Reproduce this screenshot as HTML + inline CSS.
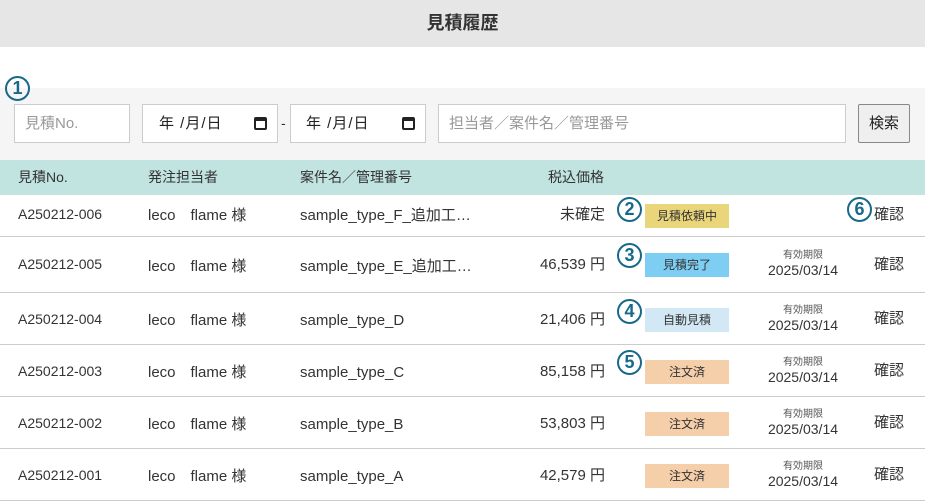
<!DOCTYPE html>
<html><head><meta charset="utf-8"><style>
*{box-sizing:border-box;margin:0;padding:0}
body{width:925px;height:502px;overflow:hidden;background:#fff;font-family:"Liberation Sans","Noto Sans CJK JP",sans-serif;color:#333;position:relative}
.hd{height:47px;background:#e6e6e6;text-align:center;font-weight:bold;font-size:18px;line-height:47px;color:#333}
.filter{position:absolute;top:88px;left:0;width:925px;height:72px;background:#f5f5f5}
.inp{position:absolute;top:16px;height:39px;background:#fff;border:1px solid #ccc;font-size:15px;line-height:37px;padding-left:10px;color:#999}
.date{color:#222;letter-spacing:1px}
.cal{position:absolute;right:10px;top:12px;width:13px;height:13px;border:2px solid #222;border-top-width:4px;border-radius:2px}
.btn{position:absolute;left:858px;top:16px;width:52px;height:39px;background:#efefef;border:1px solid #888;border-radius:2px;font-size:15px;line-height:37px;text-align:center;color:#222}
.num{position:absolute;width:25px;height:25px;border:2px solid #17698a;border-radius:50%;color:#17698a;font-size:18px;line-height:21px;font-weight:bold;text-align:center}
.th{position:absolute;top:160px;left:0;width:925px;height:35px;background:#c2e4e1;font-size:14px}
.th span,.row span{position:absolute;line-height:20px}
.th span{top:7px}
.row{position:absolute;left:0;width:925px;border-bottom:1px solid #ccc;font-size:15px}
.c1{left:18px;font-size:14px}.c2{left:148px;margin-top:2px}.c3{left:300px;margin-top:2px}.c4{right:320px;margin-top:1px}
.row span.bd{left:645px;width:84px;height:24px;font-size:12px;line-height:24px;text-align:center;color:#333}
.row span.ex{left:763px;width:80px;text-align:center;font-size:14px;line-height:16px}
.ex small{display:block;font-size:10px;color:#555;line-height:12px}
.ok{left:874px;margin-top:1px}
</style></head><body>
<div class="hd">見積履歴</div>
<div class="filter">
<div class="inp" style="left:14px;width:116px">見積No.</div>
<div class="inp date" style="left:142px;width:136px;padding-left:16px">年 /月/日<div class="cal"></div></div>
<div style="position:absolute;left:281px;top:27px;font-size:14px">-</div>
<div class="inp date" style="left:290px;width:136px;padding-left:15px">年 /月/日<div class="cal"></div></div>
<div class="inp" style="left:438px;width:408px">担当者／案件名／管理番号</div>
<div class="btn">検索</div>
</div>
<div class="num" style="left:5px;top:76px">1</div>
<div class="th"><span style="left:18px">見積No.</span><span style="left:148px">発注担当者</span><span style="left:300px">案件名／管理番号</span><span style="left:548px">税込価格</span></div>

<div class="row" style="top:195px;height:42px"><span class="c1" style="top:9px">A250212-006</span><span class="c2" style="top:9px">leco　flame 様</span><span class="c3" style="top:9px">sample_type_F_追加工…</span><span class="c4" style="top:9px">未確定</span><span class="bd" style="top:9px;background:#ead67a">見積依頼中</span><span class="ok" style="top:9px">確認</span></div>
<div class="row" style="top:237px;height:56px"><span class="c1" style="top:17px">A250212-005</span><span class="c2" style="top:18px">leco　flame 様</span><span class="c3" style="top:18px">sample_type_E_追加工…</span><span class="c4" style="top:17px">46,539 円</span><span class="bd" style="top:16px;background:#7ecdf2">見積完了</span><span class="ex" style="top:13px"><small>有効期限</small>2025/03/14</span><span class="ok" style="top:17px">確認</span></div>
<div class="row" style="top:293px;height:52px"><span class="c1" style="top:16px">A250212-004</span><span class="c2" style="top:16px">leco　flame 様</span><span class="c3" style="top:16px">sample_type_D</span><span class="c4" style="top:16px">21,406 円</span><span class="bd" style="top:15px;background:#d2e9f5">自動見積</span><span class="ex" style="top:12px"><small>有効期限</small>2025/03/14</span><span class="ok" style="top:15px">確認</span></div>
<div class="row" style="top:345px;height:52px"><span class="c1" style="top:16px">A250212-003</span><span class="c2" style="top:16px">leco　flame 様</span><span class="c3" style="top:16px">sample_type_C</span><span class="c4" style="top:16px">85,158 円</span><span class="bd" style="top:15px;background:#f5ceaa">注文済</span><span class="ex" style="top:12px"><small>有効期限</small>2025/03/14</span><span class="ok" style="top:15px">確認</span></div>
<div class="row" style="top:397px;height:52px"><span class="c1" style="top:16px">A250212-002</span><span class="c2" style="top:16px">leco　flame 様</span><span class="c3" style="top:16px">sample_type_B</span><span class="c4" style="top:16px">53,803 円</span><span class="bd" style="top:15px;background:#f5ceaa">注文済</span><span class="ex" style="top:12px"><small>有効期限</small>2025/03/14</span><span class="ok" style="top:15px">確認</span></div>
<div class="row" style="top:449px;height:52px"><span class="c1" style="top:16px">A250212-001</span><span class="c2" style="top:16px">leco　flame 様</span><span class="c3" style="top:16px">sample_type_A</span><span class="c4" style="top:16px">42,579 円</span><span class="bd" style="top:15px;background:#f5ceaa">注文済</span><span class="ex" style="top:12px"><small>有効期限</small>2025/03/14</span><span class="ok" style="top:15px">確認</span></div>

<div class="num" style="left:617px;top:197px">2</div>
<div class="num" style="left:617px;top:243px">3</div>
<div class="num" style="left:617px;top:299px">4</div>
<div class="num" style="left:617px;top:350px">5</div>
<div class="num" style="left:847px;top:197px">6</div>
</body></html>
